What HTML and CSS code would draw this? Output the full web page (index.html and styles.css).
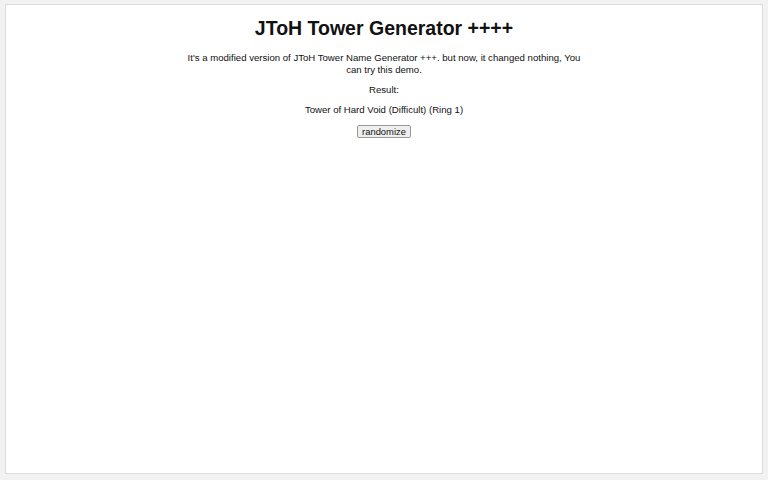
FILE: index.html
```html
<!DOCTYPE html>
<html lang="en">
<head>
  <meta charset="UTF-8">
  <meta name="viewport" content="width=device-width, initial-scale=1.0">
  <title>JToH Tower Generator ++++</title>
  <link rel="stylesheet" href="styles.css">
</head>
<body>
  <div class="container">
    <h1>JToH Tower Generator ++++</h1>
    <p class="intro">It's a modified version of JToH Tower Name Generator +++. but now, it changed nothing, You can try this demo.</p>
    <p>Result:</p>
    <p id="result">Tower of Hard Void (Difficult) (Ring 1)</p>
    <button id="randomize">randomize</button>
  </div>
  <script>
    const prefixes = ['Hard', 'Soft', 'Bright', 'Dark', 'Hollow', 'Frozen'];
    const words = ['Void', 'Climb', 'Ascent', 'Madness', 'Pain', 'Rage'];
    const difficulties = ['Easy', 'Medium', 'Hard', 'Difficult', 'Challenging', 'Intense'];

    function pick(list) {
      return list[Math.floor(Math.random() * list.length)];
    }

    document.getElementById('randomize').addEventListener('click', function () {
      const ring = Math.floor(Math.random() * 9) + 1;
      document.getElementById('result').textContent =
        'Tower of ' + pick(prefixes) + ' ' + pick(words) + ' (' + pick(difficulties) + ') (Ring ' + ring + ')';
    });
  </script>
</body>
</html>
```

FILE: styles.css
```css
html, body {
  height: 100%;
}

body {
  font-family: "Liberation Sans", Arial, sans-serif;
  background-color: #f2f2f2;
  margin: 0;
  padding: 4px 5px 6px 5px;
  box-sizing: border-box;
}

.container {
  background: #ffffff;
  border: 1px solid #dddddd;
  height: 100%;
  box-sizing: border-box;
  text-align: center;
  padding: 12px 0;
}

h1 {
  color: #111;
  font-size: 19.5px;
  line-height: 22px;
  margin: 0 0 13px 0;
}

p {
  font-size: 9.6px;
  color: #111;
  margin: 0 0 8px 0;
  line-height: 12px;
}

.intro {
  max-width: 400px;
  margin: 0 auto 8px auto;
}

button {
  display: block;
  margin: 9px auto 0 auto;
  font-family: "Liberation Sans", Arial, sans-serif;
  font-size: 9.4px;
  line-height: 11px;
  padding: 0 4px;
  background-color: #efefef;
  border: 1px solid #999;
  border-radius: 2px;
  color: #111;
}
```
